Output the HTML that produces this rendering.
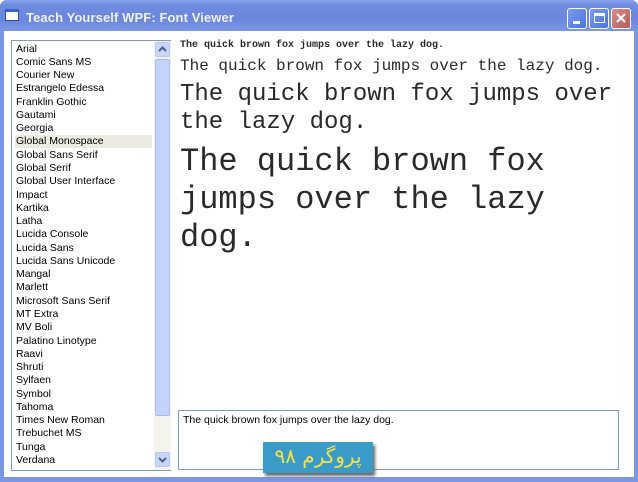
<!DOCTYPE html>
<html><head><meta charset="utf-8"><style>
*{margin:0;padding:0;box-sizing:border-box}
body{width:638px;height:482px;overflow:hidden;background:#fff;font-family:"Liberation Sans",sans-serif;position:relative}
.win{position:absolute;left:0;top:0;width:638px;height:482px;background:linear-gradient(#0a5fe0,#2a6ee8);border-radius:7px 7px 0 0}
.title{position:absolute;left:0;top:0;width:638px;height:31px;border-radius:7px 7px 0 0;background:linear-gradient(#8aa6ec 0%,#6f8ce0 15%,#6a87dd 60%,#7b96e2 100%)}
.title span{position:absolute;left:26px;top:10px;color:#eef2fc;font:bold 13px "Liberation Sans",sans-serif;letter-spacing:0.1px}
.ico{position:absolute;left:5px;top:9px;width:14px;height:12px;background:#fff;border:1px solid #2b4fa8;border-top:3px solid #3a63c8}
.btn{position:absolute;top:8px;width:20px;height:21px;border:1px solid #fff;border-radius:3px;background:linear-gradient(135deg,#7d9cf2,#4b73dc)}
.frame{position:absolute;left:0;top:31px;width:638px;height:451px;background:#7b96e2}
.client{position:absolute;left:4px;top:31px;width:630px;height:446px;background:#fff}
.list{position:absolute;left:11px;top:40px;width:160px;height:431px;border:1px solid #7f9db9;background:#fff}
.item{position:absolute;left:3px;height:13px;font-size:10.5px;line-height:13px;color:#000;width:137px;padding-left:1px}
.sel{background:#ecebe0}
.sb{position:absolute;left:142px;top:0;width:17px;height:429px;background:#f4f3ee}
.thumb{position:absolute;left:1px;top:18px;width:15px;height:357px;border:1px solid #a8bdf0;border-radius:2px;background:#c3d3fd}
.arrow{position:absolute;left:1px;width:15px;height:15px;border:1px solid #b6c8f6;border-radius:2px;background:#c5d5fd}
.arrow svg{position:absolute;left:2px;top:3px}
.m{position:absolute;left:180px;font-family:"Liberation Mono",monospace;color:#2a2a2a;white-space:pre}
.tb{position:absolute;left:178px;top:410px;width:441px;height:60px;border:1px solid #7f9db9}
.tb span{position:absolute;left:4px;top:3px;font-size:10.5px}
.badge{position:absolute;left:263px;top:442px;width:110px;height:31px;background:#3a9bc8;box-shadow:2px 3px 3px #666;color:#f5e24a;font:20px "DejaVu Sans",sans-serif;text-align:center;line-height:29px}
</style></head><body>
<div class="win"></div>
<div class="frame"></div>
<div class="title"><div class="ico"></div><span>Teach Yourself WPF: Font Viewer</span>
<div class="btn" style="left:567px"><div style="position:absolute;left:5px;top:12px;width:7px;height:3px;background:#fff"></div></div>
<div class="btn" style="left:589px"><div style="position:absolute;left:4px;top:4px;width:11px;height:10px;border:1px solid #fff;border-top:3px solid #fff"></div></div>
<div class="btn" style="left:611px;background:linear-gradient(135deg,#d68d8d,#b55a5a)"><svg width="18" height="19" style="position:absolute;left:0;top:0"><path d="M5 5L13 13M13 5L5 13" stroke="#fff" stroke-width="2"/></svg></div>
</div>
<div class="client"></div>
<div class="list">
<div class="item" style="top:2px">Arial</div>
<div class="item" style="top:15px">Comic Sans MS</div>
<div class="item" style="top:28px">Courier New</div>
<div class="item" style="top:41px">Estrangelo Edessa</div>
<div class="item" style="top:55px">Franklin Gothic</div>
<div class="item" style="top:68px">Gautami</div>
<div class="item" style="top:81px">Georgia</div>
<div class="item sel" style="top:94px">Global Monospace</div>
<div class="item" style="top:108px">Global Sans Serif</div>
<div class="item" style="top:121px">Global Serif</div>
<div class="item" style="top:134px">Global User Interface</div>
<div class="item" style="top:148px">Impact</div>
<div class="item" style="top:161px">Kartika</div>
<div class="item" style="top:174px">Latha</div>
<div class="item" style="top:187px">Lucida Console</div>
<div class="item" style="top:201px">Lucida Sans</div>
<div class="item" style="top:214px">Lucida Sans Unicode</div>
<div class="item" style="top:227px">Mangal</div>
<div class="item" style="top:240px">Marlett</div>
<div class="item" style="top:254px">Microsoft Sans Serif</div>
<div class="item" style="top:267px">MT Extra</div>
<div class="item" style="top:280px">MV Boli</div>
<div class="item" style="top:294px">Palatino Linotype</div>
<div class="item" style="top:307px">Raavi</div>
<div class="item" style="top:320px">Shruti</div>
<div class="item" style="top:333px">Sylfaen</div>
<div class="item" style="top:347px">Symbol</div>
<div class="item" style="top:360px">Tahoma</div>
<div class="item" style="top:373px">Times New Roman</div>
<div class="item" style="top:386px">Trebuchet MS</div>
<div class="item" style="top:400px">Tunga</div>
<div class="item" style="top:413px">Verdana</div>
<div class="sb"><div class="arrow" style="top:1px"><svg width="9" height="7"><path d="M1 5L4.5 1.5L8 5" stroke="#4d6185" stroke-width="2" fill="none"/></svg></div><div class="thumb"></div><div class="arrow" style="top:411px"><svg width="9" height="7"><path d="M1 2L4.5 5.5L8 2" stroke="#4d6185" stroke-width="2" fill="none"/></svg></div></div>
</div>
<div class="m" style="top:40px;font-size:10px;line-height:12px;font-weight:bold">The quick brown fox jumps over the lazy dog.</div>
<div class="m" style="top:56px;font-size:16px;line-height:20px">The quick brown fox jumps over the lazy dog.</div>
<div class="m" style="top:81px;font-size:24px;line-height:28px">The quick brown fox jumps over
the lazy dog.</div>
<div class="m" style="top:143px;font-size:32px;line-height:38px">The quick brown fox
jumps over the lazy
dog.</div>
<div class="tb"><span>The quick brown fox jumps over the lazy dog.</span></div>
<div class="badge">پروگرم ۹۸</div>
</body></html>
